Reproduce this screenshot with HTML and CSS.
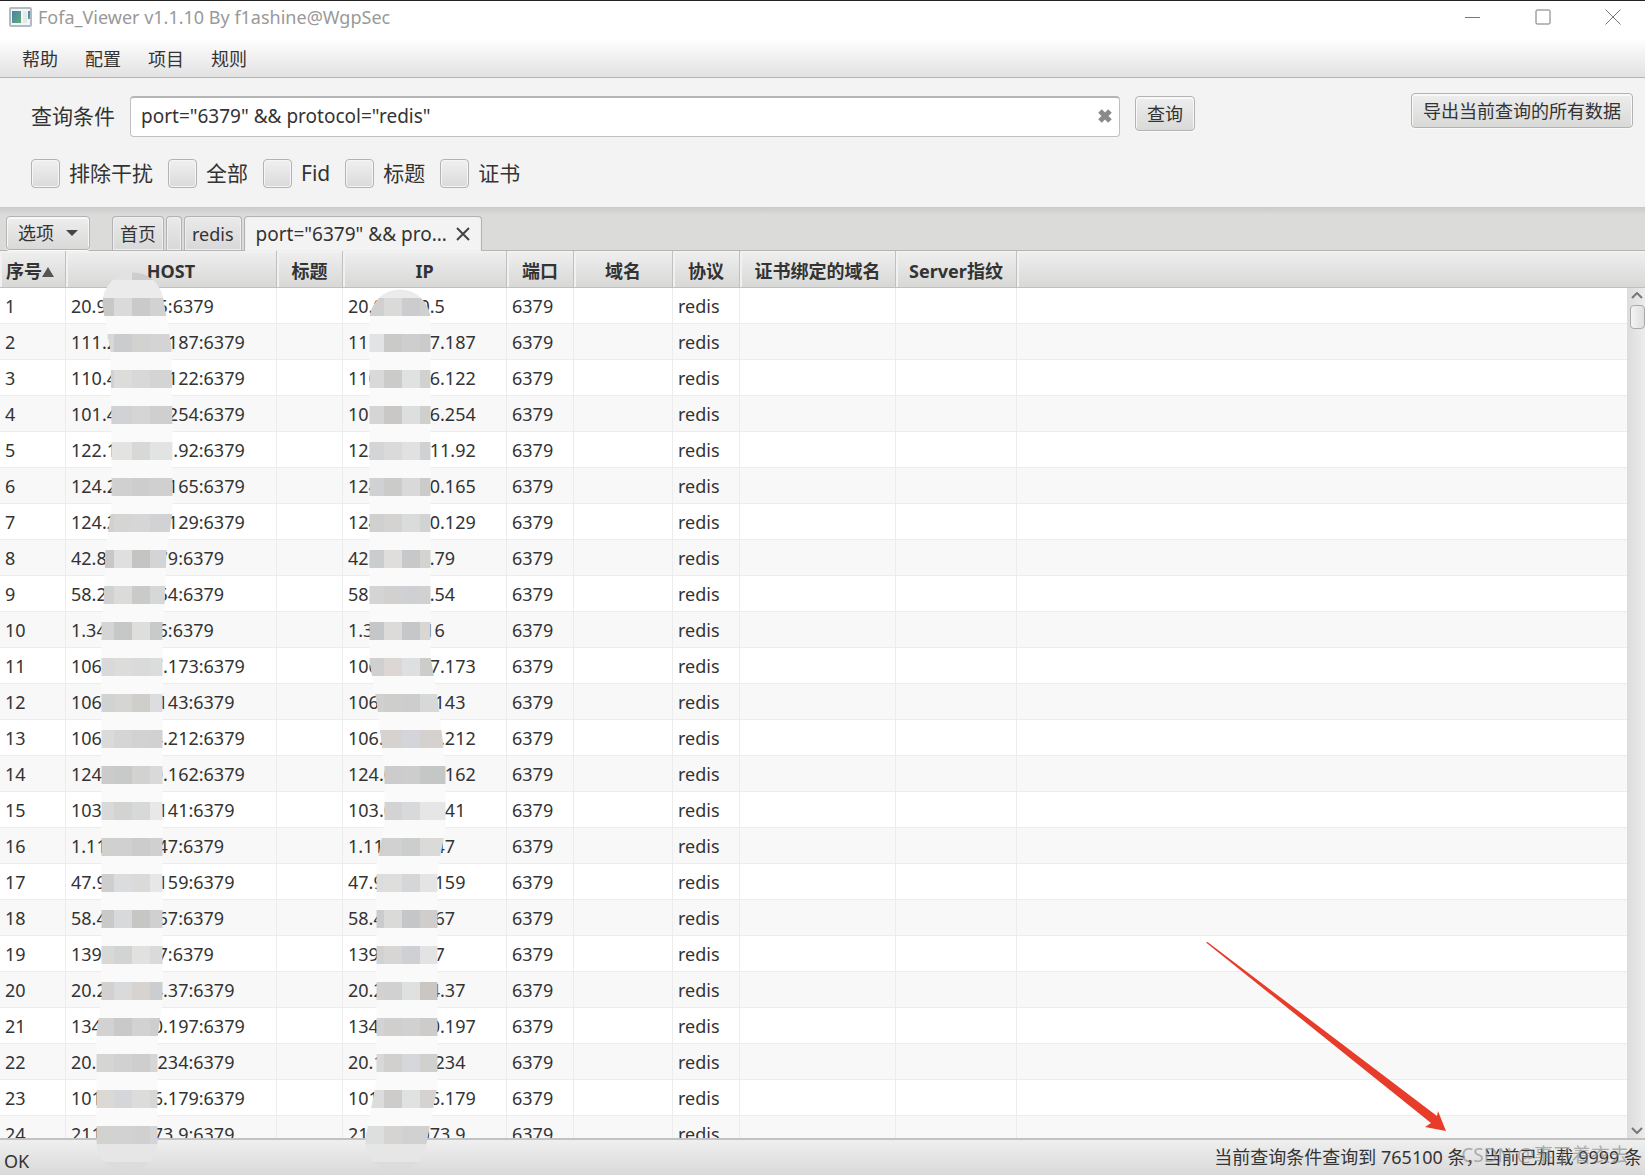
FILE: index.html
```html
<!DOCTYPE html>
<html lang="zh-CN">
<head>
  <meta charset="UTF-8">
  <meta name="viewport" content="width=device-width, initial-scale=1.0">
  <title>Fofa_Viewer</title>
  <link rel="stylesheet" href="styles.css">
</head>
<body>
  <!-- Title bar -->
  <header class="titlebar">
    <svg class="app-icon" width="23" height="20" viewBox="0 0 23 20">
      <defs>
        <linearGradient id="pane" x1="0" y1="0" x2="1" y2="1">
          <stop offset="0" stop-color="#4a7fb0"/>
          <stop offset="1" stop-color="#5fae74"/>
        </linearGradient>
      </defs>
      <rect x="1" y="1" width="21" height="18" rx="1" fill="#f4f6f8" stroke="#b4bac2" stroke-width="2"/>
      <rect x="3" y="4" width="9" height="12" fill="url(#pane)"/>
      <rect x="14" y="4" width="4" height="12" fill="#e6e9ec"/>
      <rect x="19" y="4" width="2" height="8" fill="url(#pane)"/>
    </svg>
    <h1>Fofa_Viewer v1.1.10 By f1ashine@WgpSec</h1>
    <div class="window-buttons">
      <button type="button" aria-label="Minimize"><svg width="16" height="16"><path d="M0 8.5h15"/></svg></button>
      <button type="button" aria-label="Maximize"><svg width="16" height="16"><rect x="1" y="1" width="14" height="14" rx="1"/></svg></button>
      <button type="button" aria-label="Close"><svg width="16" height="16"><path d="M0.5 0.5l15 15M15.5 0.5l-15 15"/></svg></button>
    </div>
  </header>

  <nav class="menubar">
    <button type="button">帮助</button>
    <button type="button">配置</button>
    <button type="button">项目</button>
    <button type="button">规则</button>
  </nav>

  <!-- Query form -->
  <form class="query">
    <div class="query-row">
      <label for="condition">查询条件</label>
      <div class="field">
        <input type="text" id="condition" value="port=&quot;6379&quot; &amp;&amp; protocol=&quot;redis&quot;">
        <button type="button" class="clear" aria-label="Clear"><svg width="14" height="14"><path d="M2 2l10 10M12 2L2 12"/></svg></button>
      </div>
      <button type="button" class="btn">查询</button>
      <button type="button" class="btn export">导出当前查询的所有数据</button>
    </div>
    <div class="checks">
      <label><input type="checkbox">排除干扰</label>
      <label><input type="checkbox">全部</label>
      <label><input type="checkbox">Fid</label>
      <label><input type="checkbox">标题</label>
      <label><input type="checkbox">证书</label>
    </div>
  </form>

  <!-- Tabs -->
  <div class="tabstrip">
    <button type="button" class="btn options">选项<svg width="12" height="6"><path d="M0 0h12L6 6z"/></svg></button>
    <div class="tabs">
      <button type="button" class="tab">首页</button>
      <button type="button" class="tab" aria-label="Empty"></button>
      <button type="button" class="tab">redis</button>
      <button type="button" class="tab active">port="6379" &amp;&amp; pro...<svg width="14" height="14"><path d="M1 1l12 12M13 1L1 13"/></svg></button>
    </div>
  </div>

  <!-- Results -->
  <main class="results">
    <table>
      <colgroup>
        <col class="c-id"><col class="c-host"><col class="c-title"><col class="c-ip"><col class="c-port">
        <col class="c-domain"><col class="c-protocol"><col class="c-cert"><col class="c-server"><col>
      </colgroup>
      <thead>
        <tr>
          <th class="sorted">序号<svg width="12" height="10"><path d="M0 10L6 0l6 10z"/></svg></th>
          <th>HOST</th><th>标题</th><th>IP</th><th>端口</th><th>域名</th><th>协议</th><th>证书绑定的域名</th><th>Server指纹</th><th></th>
        </tr>
      </thead>
      <tbody id="rows"></tbody>
    </table>
    <div class="scrollbar">
      <svg width="12" height="7"><path d="M1 6l5-5 5 5"/></svg>
      <div class="thumb"></div>
      <svg width="12" height="7"><path d="M1 1l5 5 5-5"/></svg>
    </div>
    <svg class="mosaic" width="520" height="930">
      <defs>
        <mask id="host-brush" maskUnits="userSpaceOnUse" x="0" y="0" width="520" height="930">
          <polyline points="133,52 141,98 142,180 142,260 136,300 134,355 132,372 132,748 127,785 127,890"/>
        </mask>
        <mask id="ip-brush" maskUnits="userSpaceOnUse" x="0" y="0" width="520" height="930">
          <polyline points="400,69 400,408 407,448 415,515 415,575 407,618 407,832 396,890"/>
        </mask>
      </defs>
      <g id="host-cells" mask="url(#host-brush)"></g>
      <g id="ip-cells" mask="url(#ip-brush)"></g>
    </svg>
  </main>

  <footer class="statusbar">
    <span class="state">OK</span>
    <span class="counts">当前查询条件查询到 765100 条，当前已加载 9999 条</span>
    <span class="watermark">CSDN @事了着衣去</span>
  </footer>

  <svg class="arrow" width="241" height="190"><path d="M0 0.500L1.500 0L231 174L232 169L240 189L219 185L225 181z"/></svg>

  <script>
    const ips = [
      '20.90.000.5', '111.20.007.187', '110.40.006.122', '101.40.006.254', '122.100.011.92', '124.20.000.165',
      '124.20.000.129', '42.80.005.79', '58.20.005.54', '1.34.000.16', '106.00.007.173', '106.00.00.143',
      '106.00.004.212', '124.000.00.162', '103.00.00.141', '1.110.000.47', '47.90.000.159', '58.40.000.67',
      '139.00.00.7', '20.200.004.37', '134.00.000.197', '20.100.00.234', '101.00.006.179', '211.000.073.9'
    ];

    document.getElementById('rows').innerHTML = ips.map((ip, i) =>
      `<tr><td>${i + 1}</td><td>${ip}:6379</td><td></td><td>${ip}</td><td>6379</td>` +
      '<td></td><td>redis</td><td></td><td></td><td></td></tr>'
    ).join('');

    // Shades of the mosaic blocks, four per row
    const hostShades = [
      'c8c8c8 dadada cacaca d2d2d3', 'd8d8d8 cacccd d2d2d1 d4d4d4', 'd0d1d6 dcdcdb d8d8d8 d4d4d4', 'd0d1d6 d1d2d3 d5d5d5 cfcfcf',
      'e4e4e3 e3e3e2 d8d8d7 e2e4e3', 'd2d2d2 d0d0d0 cdcdce d0d0d0', 'd1d1d2 d5d5d4 d6d6d6 d2d2d4', 'c8c8c7 dedfde c4c4c3 d3d4d5',
      'd1d1d1 dbdbda cacac8 d6d7d7', 'd5d5d5 c5c8c7 dededd c8cac9', 'd9d9d9 dcdcdb d9dad9 dbdddc', 'd2d2d3 d5d5d4 cfcecb dcdddf',
      'dadad9 d5d5d5 d2d2d2 d1d1d2', 'cbcbcc c8caca d2d2d1 d9d9da', 'd8d9d8 d3d3d2 d7d9d8 e8e8e8', 'd0d0cf d0d0d0 cccccc d0d0d1',
      'cecece dbdcdd dadad9 e7e7e7', 'c9c9c8 d8d9da c6c6c5 d0d0d1', 'd8d8d7 d2d3d3 e1e1e0 dadada', 'd2d1d0 d8dadc d6d3d0 cbcdd0',
      'd2d2d3 c9c9c9 d2d2d2 cecece', 'd5d5d4 d1d1d1 cecece d6d6d7', 'dad9d6 d5d6da dcdcdb d7d7d8', 'd2d2d1 d2d2d2 d0d0d0 d5d5d5'
    ];
    const ipShades = [
      'd0d0d0 dadad9 ccccce d0d0d1', 'e2e3e4 cacac9 cecece cbcbcb', 'd9d9d9 cbcbca e0e1e1 d1d1d0', 'd5d5d5 c9c8c7 dddfdf cfcfce',
      'd4d5d7 dadada e1e1e2 d0d1d3', 'd0d1d2 cbcbca d9d9d9 cbcbca', 'd0d0d0 d4d3d2 dadcdb d2d3d5', 'cbccce dfdedd c6c8c9 d3d3d0',
      'd4d4d4 d2d1d0 cfd0d3 d1d1d0', 'c5c6c8 dddbd9 c6c7c9 d9d6d4', 'd0d0d0 dcd7d4 dddfe1 ccccca', 'd0d0d0 cececd cdcdce d7d8d8',
      'd5d2cf d5d2cf d3d5da d4d1ce', 'cfcfce cdcccc cdcdce c5c7c6', 'd2d2d1 d3d3d3 d8d9db e6e6e7', 'd0d0cf d2d1d1 cccdcd dadad9',
      'dcdddd dededd d5d6d7 e4e4e4', 'cacbcd dadad9 c5c6c7 cfcecd', 'd2d2d3 d7d6d5 ced0d3 e3e3e4', 'd2d2d3 d1d1d2 dfe0e0 cac7c3',
      'd3d3d3 d0cfce d1d1d1 cdcccb', 'd8d8d8 d1d0cf d5d7da d0d0cf', 'dcdcdc cdcccb e0e2e1 d4d3d2', 'dddede d5d4d2 d1d1d1 d1d1d1'
    ];

    function paint(id, x, shades) {
      const rect = (rx, y, w, h, c) => `<rect x="${rx}" y="${y}" width="${w}" height="${h}" fill="#${c}"/>`;
      let out = rect(x, 0, 126, 930, 'fafafa') + rect(x, 29, 126, 18, 'ebebeb') +
        rect(x, 0, 54, 29, 'e2e2e2') + rect(x + 54, 0, 72, 29, 'cdcdcd');
      shades.forEach((row, i) => {
        row.split(' ').forEach((c, j) => {
          const wide = j === 0 || j === 3;
          out += rect(x + (j === 0 ? 0 : 18 + j * 18), 47 + i * 36, wide ? 36 : 18, 18, c);
        });
      });
      out += rect(x, 893, 126, 18, 'e6e6e6') + rect(x, 911, 126, 18, 'dcdcdc');
      document.getElementById(id).innerHTML = out;
    }
    paint('host-cells', 78, hostShades);
    paint('ip-cells', 348, ipShades);
  </script>
</body>
</html>
```
FILE: styles.css
```css
/* Global Styles */
* { box-sizing: border-box; }
body {
  margin: 0;
  height: 100vh;
  display: flex;
  flex-direction: column;
  position: relative;
  overflow: hidden;
  background: #f3f3f3;
  color: #333;
  font-family: "Noto Sans", "Noto Sans CJK SC", sans-serif;
  font-size: 18px;
  line-height: 24px;
}
button, input { font: inherit; color: inherit; }
button { border: none; background: none; padding: 0; }
svg { display: block; flex: none; }

/* Title bar */
.titlebar {
  display: flex;
  align-items: center;
  height: 40px;
  padding: 0 24px 7px 9px;
  border-top: 1px solid #222;
  background: #fff;
}
.titlebar h1 {
  margin: 0 0 0 6px;
  font-size: 18px;
  font-weight: normal;
  color: #999;
}
.window-buttons { display: flex; gap: 54px; margin-left: auto; }
.window-buttons svg { fill: none; stroke: #777; }

/* Menu bar */
.menubar {
  display: flex;
  gap: 27px;
  height: 38px;
  padding: 0 22px;
  background: linear-gradient(#fdfdfd, #e2e2e2);
  border-bottom: 1px solid #b5b5b5;
}

/* Query form */
.query { padding: 15px 12px 19px 31px; }
.query-row { display: flex; align-items: flex-start; }
.query-row label { font-size: 21px; line-height: 46px; margin-right: 15px; }
.field {
  display: flex;
  align-items: center;
  width: 990px;
  height: 41px;
  margin: 3px 15px 0 0;
  padding: 0 7px 2px 10px;
  border: 1px solid #c0c0c0;
  border-top: 2px solid #b5b5b5;
  border-radius: 4px;
  background: #fff;
}
.field input { flex: 1; min-width: 0; padding: 0; border: none; outline: none; background: none; font-size: 19px; }
.clear svg { fill: none; stroke: #8a8a8a; stroke-width: 5; }
.btn {
  height: 35px;
  margin-top: 3px;
  padding: 0 11px;
  border: 1px solid #b3b3b3;
  border-radius: 4px;
  background: linear-gradient(#eee, #d9d9d8);
  box-shadow: inset 0 1px 0 1px #f8f8f8, 0 1px 0 #fafafa;
  white-space: nowrap;
}
.export { margin: 0 0 0 auto; }
.checks { display: flex; gap: 15px; margin-top: 19px; }
.checks label { display: flex; align-items: center; gap: 9px; font-size: 21px; line-height: 30px; }
.checks input {
  appearance: none;
  width: 29px;
  height: 29px;
  margin: 0;
  border: 1px solid #b3b3b3;
  border-radius: 4px;
  background: linear-gradient(#f0f0f0, #dadada);
  box-shadow: inset 0 0 0 1px #f6f6f6;
}

/* Tabs */
.tabstrip {
  display: flex;
  height: 44px;
  padding: 9px 6px 0;
  background: linear-gradient(#cacaca, #dbdbda 8px);
  border-bottom: 1px solid #b5b5b5;
}
.options { display: flex; align-items: center; gap: 12px; height: 34px; margin: 0; }
.options svg { fill: #444; }
.tabs { display: flex; gap: 2px; margin-left: 22px; }
.tab {
  height: 34px;
  min-width: 16px;
  padding: 0 7px;
  border: 1px solid #b3b3b3;
  border-bottom: none;
  border-radius: 4px 4px 0 0;
  background: linear-gradient(#eaeaea, #d8d8d8);
  box-shadow: inset 0 0 0 1px #efefef;
}
.tab.active {
  display: flex;
  align-items: center;
  gap: 9px;
  height: 35px;
  padding: 0 11px;
  background: #f3f3f3;
  font-size: 19px;
}
.tab svg { stroke: #444; stroke-width: 2; }

/* Results */
.results { flex: 1; min-height: 0; display: flex; position: relative; align-items: flex-start; background: #fff; }
table { flex: 1; width: 100%; table-layout: fixed; border-collapse: separate; border-spacing: 0; }
.c-id, .c-title { width: 66px; }
.c-host { width: 211px; }
.c-ip { width: 164px; }
.c-port, .c-protocol { width: 67px; }
.c-domain { width: 99px; }
.c-cert { width: 156px; }
.c-server { width: 121px; }
th {
  height: 37px;
  padding: 3px 0 0;
  background: linear-gradient(#efefef, #d8d8d7);
  border-right: 1px solid #c0c0c0;
  border-bottom: 1px solid #c0c0c0;
  box-shadow: inset 1px 1px 0 1px #f1f1f1;
  white-space: nowrap;
}
th:last-child { border-right: none; }
.sorted { padding-left: 6px; text-align: left; }
.sorted svg { display: inline-block; fill: #555; vertical-align: 1px; }
td {
  height: 36px;
  padding: 0 5px;
  border-right: 1px solid #ececec;
  border-bottom: 1px solid #ececec;
  white-space: nowrap;
}
td:last-child { border-right: none; }
tbody tr:nth-child(even) { background: #f8f8f8; }

/* Scrollbar lies over the right end of the rows */
.scrollbar {
  position: absolute;
  top: 37px;
  right: 0;
  bottom: 0;
  width: 18px;
  display: flex;
  flex-direction: column;
  align-items: flex-end;
  padding: 4px 2px 4px 3px;
  background: linear-gradient(90deg, #dcdcdc, #ececec);
}
.scrollbar svg { fill: none; stroke: #777; stroke-width: 2; }
.thumb {
  width: 15px;
  height: 24px;
  margin: 6px -2px auto 0;
  border: 1px solid #aaa;
  border-radius: 4px;
  background: linear-gradient(90deg, #f4f4f4, #dedede);
}

/* Mosaic strokes over the addresses */
.mosaic { position: absolute; top: 0; left: 0; z-index: 1; }
.mosaic polyline {
  fill: none;
  stroke: #fff;
  stroke-width: 61;
  stroke-linecap: round;
  stroke-linejoin: round;
}

/* Status bar */
.statusbar {
  display: flex;
  justify-content: space-between;
  align-items: flex-start;
  height: 37px;
  padding: 5px 3px 0 4px;
  position: relative;
  background: linear-gradient(#efefef, #d9d9d9);
  border-top: 2px solid #c2c2c2;
}
.state { padding-top: 4px; }
.watermark {
  position: absolute;
  top: 3px;
  right: 16px;
  font-size: 19px;
  color: rgba(130, 130, 130, 0.6);
}
.arrow { position: absolute; right: 198px; bottom: 43px; fill: #e83c2b; z-index: 2; }
```
